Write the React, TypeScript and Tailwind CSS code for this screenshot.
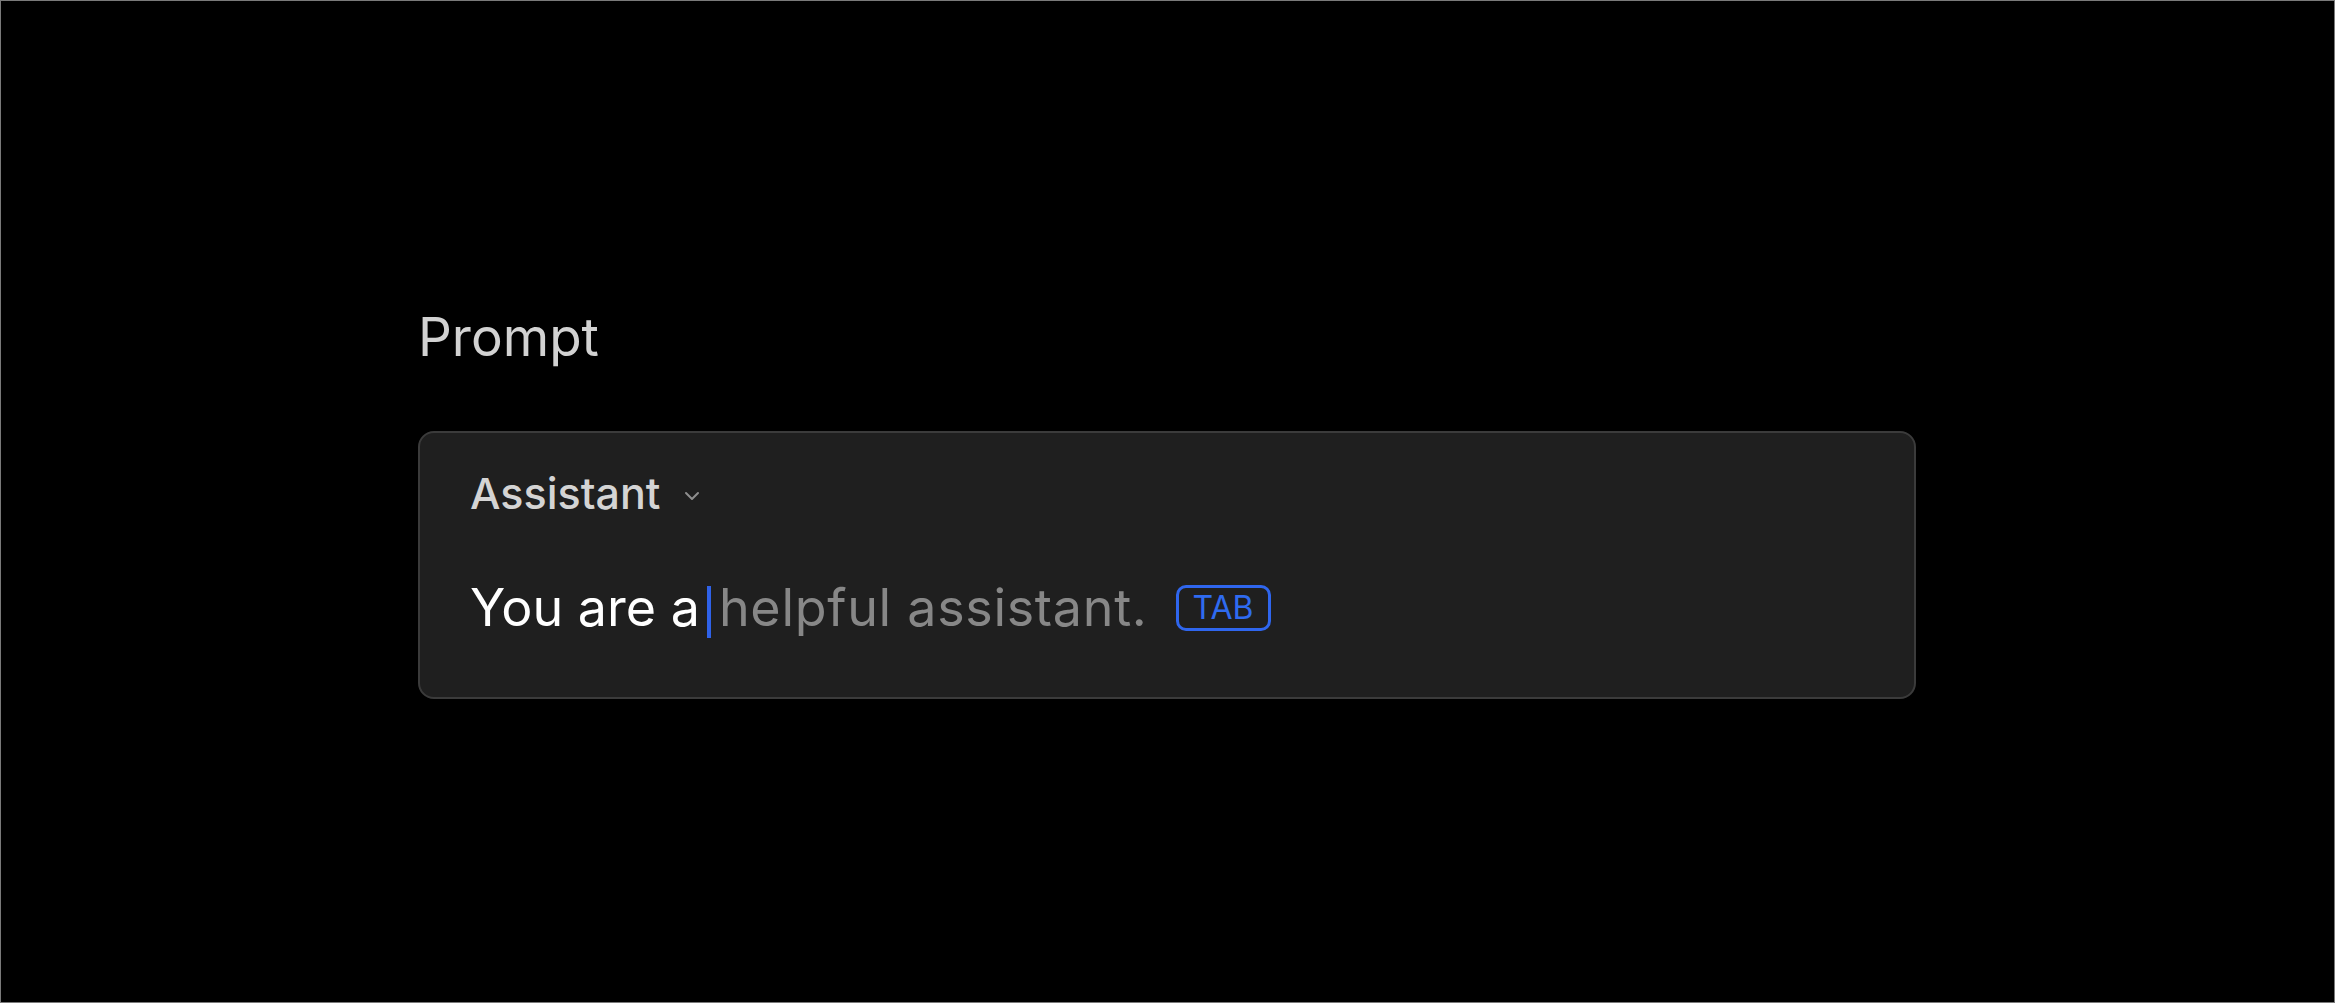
import React from 'react';

const App: React.FC = () => {
  return (
    <div
      className="w-[2335px] h-[1003px] bg-black border border-[#7a7a7a] overflow-hidden"
      style={{ fontFamily: 'Inter, "Noto Sans", sans-serif' }}
    >
      <div className="ml-[417px] mt-[310px] w-[1498px]">
        {/* Label */}
        <h1 className="text-[53px] leading-none font-normal text-[#d2d2d2]">Prompt</h1>

        {/* Prompt editor */}
        <div className="mt-[67px] h-[268px] rounded-[16px] border-2 border-[#3b3b3b] bg-[#1f1f1f] pl-[50px] pt-[39px]">
          <button className="flex items-center gap-[24px] text-[43px] leading-none font-medium text-[#d4d4d4]">
            <span>Assistant</span>
            <svg width="16" height="10" viewBox="0 0 16 10" fill="none" className="mt-[4px]">
              <path d="M2 2l6 6 6-6" stroke="#8e8e8e" strokeWidth="2" strokeLinecap="round" strokeLinejoin="round" />
            </svg>
          </button>

          <div className="mt-[63px] flex items-center text-[52px] leading-none">
            <span className="text-white">You are a</span>
            <span className="ml-[7px] mt-[8px] h-[52px] w-[4px] bg-[#2f62e8]"></span>
            <span className="ml-[8px] tracking-[0.7px] text-[#878787]">helpful assistant.</span>
            <span className="ml-[28px] flex h-[46px] w-[95px] items-center justify-center rounded-[10px] border-[3px] border-[#2f66ee] text-[32px] font-normal text-[#2f6bf0]">
              TAB
            </span>
          </div>
        </div>
      </div>
    </div>
  );
};

export default App;
